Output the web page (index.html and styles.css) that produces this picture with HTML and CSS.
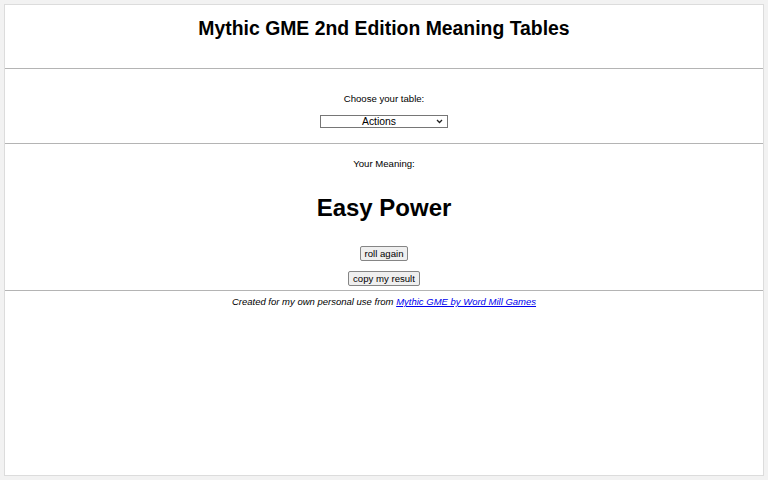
FILE: index.html
```html
<!DOCTYPE html>
<html lang="en">
<head>
    <meta charset="UTF-8">
    <meta name="viewport" content="width=device-width, initial-scale=1.0">
    <title>Mythic GME 2nd Edition Meaning Tables</title>
    <link rel="stylesheet" href="styles.css">
</head>
<body>
    <div class="page">
        <header class="top">
            <h1>Mythic GME 2nd Edition Meaning Tables</h1>
        </header>

        <section class="picker">
            <p class="label">Choose your table:</p>
            <select class="table-select" id="table">
                <option>Actions</option>
                <option>Descriptions</option>
                <option>Characters</option>
                <option>Locations</option>
            </select>
        </section>

        <section class="result">
            <p class="label">Your Meaning:</p>
            <h2 class="meaning" id="meaning">Easy Power</h2>
            <div class="actions">
                <button class="btn" id="roll">roll again</button>
                <button class="btn" id="copy">copy my result</button>
            </div>
        </section>

        <footer class="credit">
            Created for my own personal use from <a href="#">Mythic GME by Word Mill Games</a>
        </footer>
    </div>
</body>
</html>
```

FILE: styles.css
```css
body {
    margin: 0;
    padding: 4px;
    background: #f2f2f2;
    font-family: "Liberation Sans", Arial, sans-serif;
    font-size: 9.6px;
    color: #000;
}

.page {
    height: 472px;
    box-sizing: border-box;
    background: #fff;
    border: 1px solid #dcdcdc;
    text-align: center;
}

.top {
    padding: 12px 0 29px;
    border-bottom: 1px solid #b4b4b4;
}

.top h1 {
    margin: 0;
    font-size: 19.4px;
    line-height: 22px;
}

.label {
    margin: 0;
    line-height: 12px;
}

.picker {
    padding: 24px 0 15px;
    border-bottom: 1px solid #b4b4b4;
}

/* small chevron instead of the native arrow */
.table-select {
    display: block;
    margin: 10px auto 0;
    width: 128px;
    height: 13px;
    padding: 0 12px 0 2px;
    font-family: inherit;
    font-size: 10.4px;
    line-height: 11px;
    text-align: center;
    text-align-last: center;
    color: #000;
    border: 1px solid #767676;
    border-radius: 0;
    appearance: none;
    -webkit-appearance: none;
    background: #fff url("data:image/svg+xml;utf8,<svg xmlns='http://www.w3.org/2000/svg' width='7' height='5' viewBox='0 0 7 5'><path d='M1 1l2.5 2.5L6 1' fill='none' stroke='%23222' stroke-width='1.3'/></svg>") no-repeat right 4px center;
}

.result {
    padding: 14px 0 4px;
    border-bottom: 1px solid #b4b4b4;
}

.meaning {
    margin: 24px 0;
    font-size: 24px;
    line-height: 28px;
}

.actions {
    display: flex;
    flex-direction: column;
    align-items: center;
    gap: 10px;
}

.btn {
    font-family: inherit;
    font-size: 9.6px;
    line-height: 11px;
    padding: 1px 4px;
    background: #efefef;
    border: 1px solid #858585;
    border-radius: 2px;
    color: #000;
}

.credit {
    padding-top: 5px;
    line-height: 12px;
    font-size: 9.5px;
    font-style: italic;
}

.credit a {
    color: #0000ee;
}
```
